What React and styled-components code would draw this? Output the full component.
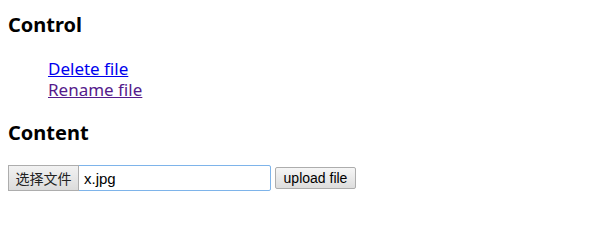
import React from 'react'
import styled, { createGlobalStyle } from 'styled-components'

const Global = createGlobalStyle`
body {
  margin: 8px;
  background: #ffffff;
  font-family: "Noto Sans", "Noto Sans CJK SC", sans-serif;
  color: #000000;
}
`;

const Heading = styled.h3`
  font-size: 20px;
  font-weight: bold;
  margin: ${p => p.$top || 0}px 0 ${p => p.$bottom || 0}px;
  line-height: 24px;
`;

const LinkList = styled.ul`
  list-style: none;
  margin: 0 0 21px;
  padding-left: 40px;
`;

const Item = styled.li`
  font-size: 17px;
  line-height: 21px;
`;

const Link = styled.a`
  color: ${p => (p.$visited ? '#551a8b' : '#0000ee')};
  text-decoration: underline;
`;

const Row = styled.div`
  display: flex;
  align-items: center;
  gap: 4px;
`;

const FileBox = styled.div`
  display: flex;
  width: 263px;
  height: 26px;
  box-sizing: border-box;
  border: 1px solid #7eb4ea;
  border-radius: 2px;
  background: #fff;
`;

const ChooseButton = styled.span`
  display: flex;
  align-items: center;
  justify-content: center;
  width: 71px;
  box-sizing: border-box;
  border: 1px solid #adadad;
  margin: -1px 0 -1px -1px;
  background: linear-gradient(#f2f2f2, #dcdcdc);
  font-family: "Noto Sans CJK SC", sans-serif;
  font-size: 14px;
  color: #222;
`;

const FileName = styled.span`
  display: flex;
  align-items: center;
  padding-left: 5px;
  font-family: "Liberation Sans", Arial, sans-serif;
  font-size: 15px;
`;

const Button = styled.button`
  width: 81px;
  height: 22px;
  padding: 0;
  border: 1px solid #adadad;
  border-radius: 2px;
  background: linear-gradient(#f6f6f6, #dddddd);
  font-family: "Liberation Sans", Arial, sans-serif;
  font-size: 14px;
  color: #000;
`;

const App = () => {
  return (
    <>
      <Global />
      <Heading $top={5} $bottom={21}>Control</Heading>
      <LinkList>
        <Item><Link href="#">Delete file</Link></Item>
        <Item><Link href="#" $visited>Rename file</Link></Item>
      </LinkList>
      <Heading $bottom={20}>Content</Heading>
      <Row>
        <FileBox>
          <ChooseButton>选择文件</ChooseButton>
          <FileName>x.jpg</FileName>
        </FileBox>
        <Button>upload file</Button>
      </Row>
    </>
  )
}

export default App
